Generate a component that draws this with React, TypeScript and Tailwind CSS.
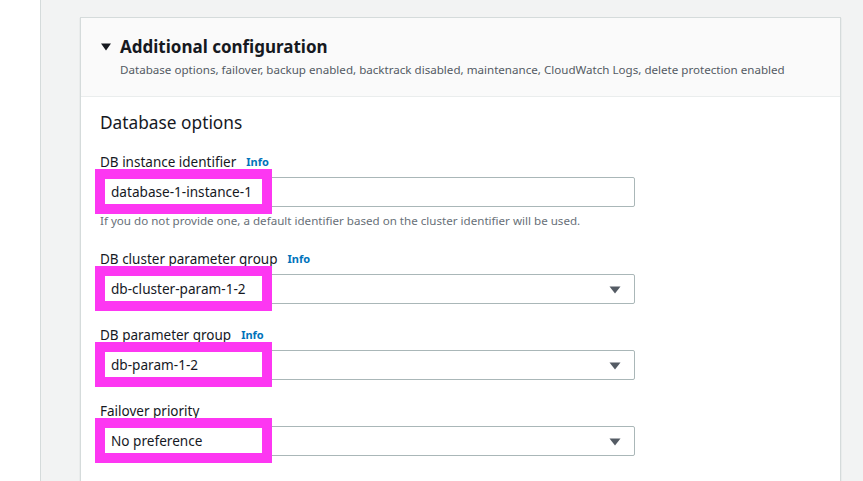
import React from "react";

const font = { fontFamily: '"Noto Sans", "Open Sans", Arial, sans-serif' };

function Highlight({ children }: { children: React.ReactNode }) {
  return (
    <div className="relative">
      {children}
      <div className="pointer-events-none absolute left-[-5px] top-[-8px] h-[45px] w-[177px] border-[10px] border-[#fd37f2]" />
    </div>
  );
}

function Arrow() {
  return (
    <svg width="12" height="8" viewBox="0 0 12 8" className="absolute right-[13px] top-[11px]">
      <path d="M0.5 0.5 H11.5 L6 7.5 Z" fill="#545b64" />
    </svg>
  );
}

function Field({
  label,
  info,
  value,
  select,
  helper,
  className,
}: {
  label: string;
  info?: boolean;
  value: string;
  select?: boolean;
  helper?: string;
  className?: string;
}) {
  return (
    <div className={className}>
      <div className="flex h-[20px] items-center text-[13.5px] leading-[20px] text-[#16191f]">
        <span>{label}</span>
        {info && <span className="ml-[10px] text-[11px] font-bold text-[#0073bb]">Info</span>}
      </div>
      <div className="mt-[5px]">
        <Highlight>
          <div className="relative flex h-[30px] w-[535px] items-center rounded-[2px] border border-[#aab7b8] bg-white pl-[10px] text-[13.6px] text-[#16191f]">
            {value}
            {select && <Arrow />}
          </div>
        </Highlight>
      </div>
      {helper && (
        <div className="mt-[6px] h-[16px] text-[11.6px] leading-[16px] text-[#687078]">{helper}</div>
      )}
    </div>
  );
}

export default function App() {
  return (
    <div className="flex h-[481px] w-[863px] overflow-hidden bg-white" style={font}>
      <div className="w-[40px] shrink-0 bg-white" />
      <div className="flex-1 border-l border-[#d5dbdb] bg-[#f2f3f3] pl-[39px] pt-[17px]">
        <div className="h-[500px] w-[761px] border border-[#d5dbdb] bg-white shadow-[0_1px_1px_0_rgba(0,28,36,0.2)]">
          <div className="h-[79px] border-b border-[#eaeded] bg-[#fafafa] pl-[20px] pt-[18px]">
            <div className="flex h-[22px] items-center">
              <svg width="10" height="8" viewBox="0 0 10 8" className="mr-[9px]">
                <path d="M0 0.5 H10 L5 7.5 Z" fill="#16191f" />
              </svg>
              <span className="text-[17px] font-bold leading-[22px] text-[#16191f]">
                Additional configuration
              </span>
            </div>
            <div className="mt-[4px] pl-[19px] text-[11.6px] leading-[16px] text-[#545b64]">
              Database options, failover, backup enabled, backtrack disabled, maintenance, CloudWatch Logs, delete protection enabled
            </div>
          </div>
          <div className="pl-[19px] pt-[13px]">
            <div className="h-[26px] text-[17.3px] leading-[26px] text-[#16191f]">Database options</div>
            <Field
              className="mt-[16px]"
              label="DB instance identifier"
              info
              value="database-1-instance-1"
              helper="If you do not provide one, a default identifier based on the cluster identifier will be used."
            />
            <Field className="mt-[20px]" label="DB cluster parameter group" info value="db-cluster-param-1-2" select />
            <Field className="mt-[21px]" label="DB parameter group" info value="db-param-1-2" select />
            <Field className="mt-[21px]" label="Failover priority" value="No preference" select />
          </div>
        </div>
      </div>
    </div>
  );
}
